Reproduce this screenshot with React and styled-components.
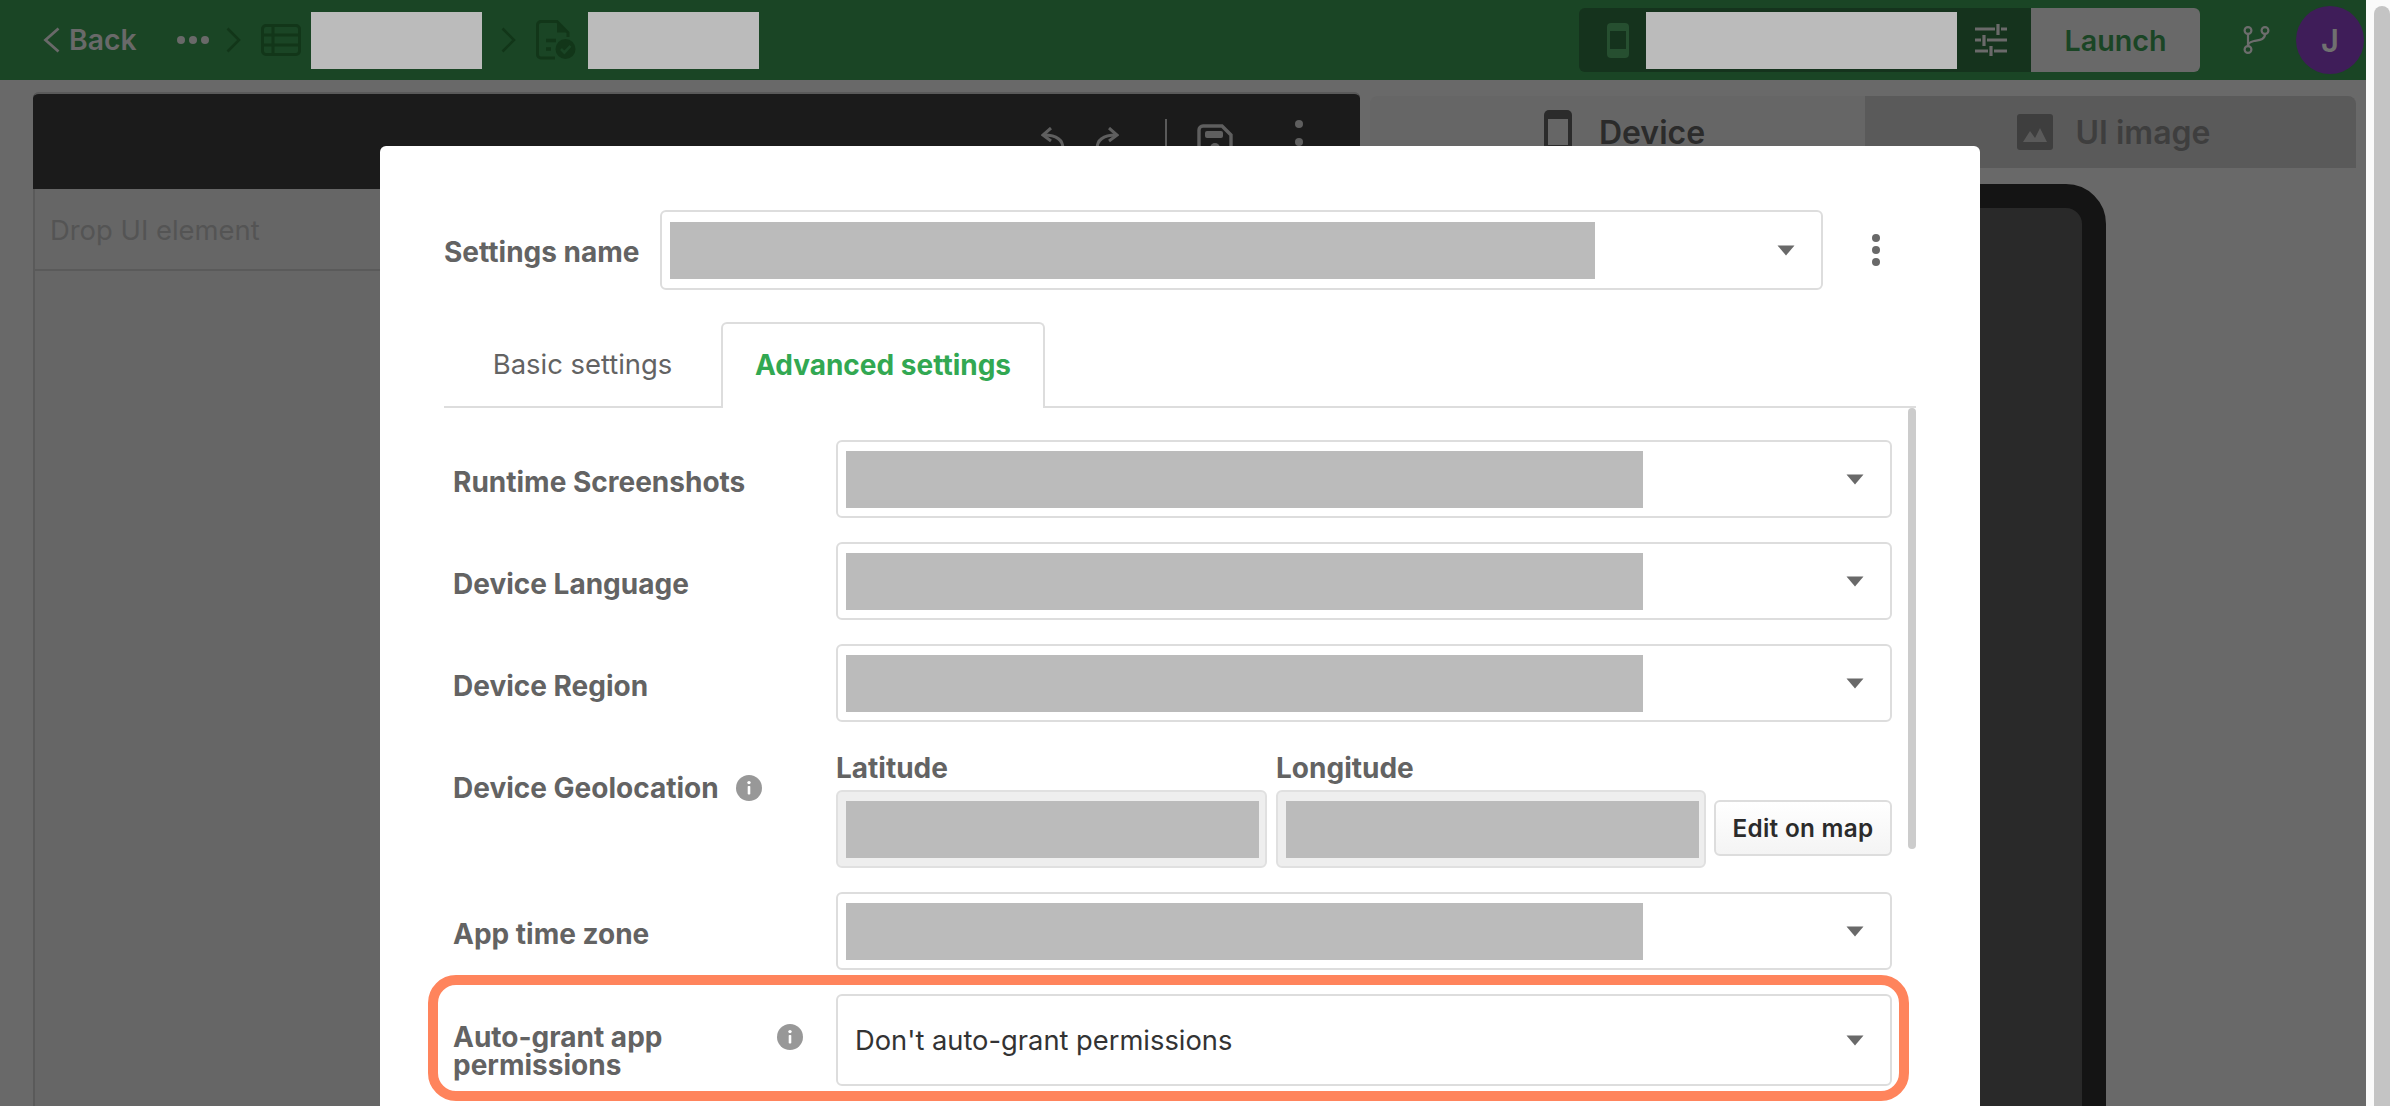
import React from "react";
import styled, { createGlobalStyle } from "styled-components";

const Global = createGlobalStyle`
  html, body { margin: 0; padding: 0; height: 100%; overflow: hidden; background: #fafafa; }
  #root { height: 100%; }
  * { box-sizing: border-box; }
  body { font-family: Inter, "Liberation Sans", sans-serif; }
`;

const Page = styled.div`
  display: flex;
  height: 1106px;
  width: 2390px;
`;
const Main = styled.div`
  position: relative;
  width: 2366px;
  display: flex;
  flex-direction: column;
  background: #696969;
  overflow: hidden;
`;
const PageScroll = styled.div`
  width: 24px;
  padding: 6px 0 0 8px;
  background: #fafafa;
`;
const PageThumb = styled.div`
  height: 100%;
  background: #c4c4c4;
  border-radius: 8px 8px 0 0;
`;

/* top bar */
const TopBar = styled.header`
  flex: none;
  height: 80px;
  background: #1a4525;
  display: flex;
  align-items: center;
  padding: 0 2px 0 43px;
`;
const BackLabel = styled.span`
  margin-left: 9px;
  font-size: 28.3px;
  font-weight: 600;
  color: #696969;
`;
const Crumbs = styled.div`
  display: flex;
  align-items: center;
  margin-left: 40px;
`;
const Redacted = styled.div`
  flex: none;
  width: ${(p) => p.$w}px;
  height: 57px;
  background: #bbbbbb;
`;
const CrumbIcon = styled.svg`
  flex: none;
  display: block;
  margin: ${(p) => p.$m || "0"};
`;
const ToolGroup = styled.div`
  margin-left: auto;
  height: 64px;
  display: flex;
  align-items: center;
  background: #15331d;
  border-radius: 6px 0 0 6px;
  padding: 0 24px 0 28px;
`;
const LaunchButton = styled.div`
  height: 64px;
  width: 169px;
  display: flex;
  align-items: center;
  justify-content: center;
  background: #696969;
  color: #1a4525;
  font-size: 28.7px;
  font-weight: 600;
  border-radius: 0 6px 6px 0;
`;
const Avatar = styled.div`
  width: 68px;
  height: 68px;
  border-radius: 50%;
  background: #3f1d59;
  color: #707070;
  font-size: 31px;
  font-weight: 600;
  display: flex;
  align-items: center;
  justify-content: center;
  margin-left: 26px;
`;

/* workspace */
const Workspace = styled.div`
  flex: 1;
  min-height: 0;
  display: flex;
  gap: 10px;
  padding: 12px 10px 0 33px;
`;
const EditorPanel = styled.section`
  width: 1327px;
  background: #666666;
  border: solid #5a5a5a;
  border-width: 0 2px;
  border-radius: 6px 6px 0 0;
  display: flex;
  flex-direction: column;
`;
const EditorHeader = styled.div`
  height: 97px;
  margin: 0 -2px;
  background: #1b1b1b;
  border-top: 2px solid #5a5a5a;
  border-radius: 6px 6px 0 0;
  display: flex;
  align-items: center;
  justify-content: flex-end;
  padding-right: 57px;
`;
const HeaderDivider = styled.div`
  width: 2px;
  height: 46px;
  background: #5a5a5a;
  margin: 0 30px 0 46px;
`;
const DropRow = styled.div`
  height: 82px;
  display: flex;
  align-items: center;
  padding: 2px 0 0 15px;
  border-bottom: 2px solid #5a5a5a;
  font-size: 27.4px;
  color: #545454;
`;
const DevicePanel = styled.section`
  width: 986px;
  margin-top: 4px;
  display: flex;
  flex-direction: column;
  align-items: center;
  overflow: hidden;
`;
const DeviceTabs = styled.div`
  flex: none;
  width: 100%;
  height: 72px;
  display: flex;
  border-radius: 8px 8px 0 0;
  overflow: hidden;
`;
const DeviceTab = styled.div`
  width: ${(p) => p.$w}px;
  display: flex;
  align-items: center;
  justify-content: center;
  gap: ${(p) => p.$gap}px;
  padding-left: ${(p) => p.$pl}px;
  background: ${(p) => (p.$active ? "#666666" : "#5a5a5a")};
  color: ${(p) => (p.$active ? "#2b2b2b" : "#3e3e3e")};
  font-size: 32px;
  font-weight: 600;
`;
const Phone = styled.div`
  flex: none;
  width: 486px;
  height: 1000px;
  margin-top: 16px;
  border: 24px solid #141414;
  border-radius: 40px;
  background: #292929;
`;

/* modal */
const Modal = styled.div`
  position: absolute;
  left: 380px;
  top: 146px;
  width: 1600px;
  height: 960px;
  background: #fff;
  border-radius: 6px 6px 0 0;
  padding: 64px 64px 0;
  overflow: hidden;
`;
const NameRow = styled.div`
  display: flex;
  align-items: center;
`;
const FieldLabel = styled.div`
  font-size: 28px;
  line-height: 28px;
  font-weight: 700;
  color: #636363;
`;
const NameLabel = styled(FieldLabel)`
  width: 216px;
  padding-top: 4px;
`;
const Select = styled.div`
  flex: ${(p) => (p.$grow ? "1" : "none")};
  height: ${(p) => p.$h || 78}px;
  display: flex;
  align-items: center;
  justify-content: space-between;
  padding: 0 26px 0 ${(p) => p.$pl || 8}px;
  background: #fff;
  border: 2px solid #dddddd;
  border-radius: 6px;
`;
const SelectText = styled.span`
  font-size: 27.3px;
  color: #333333;
`;
const KebabSlot = styled.div`
  flex: none;
  width: 93px;
  display: flex;
  justify-content: center;
  padding-left: 13px;
`;
const Tabs = styled.div`
  margin-top: 32px;
  height: 86px;
  display: flex;
  border-bottom: 2px solid #dddddd;
`;
const Tab = styled.div`
  display: flex;
  align-items: center;
  height: 86px;
  padding-bottom: 2px;
`;
const InactiveTab = styled(Tab)`
  width: 277px;
  justify-content: center;
  color: #636363;
  font-size: 27.4px;
  font-weight: 400;
`;
const ActiveTab = styled(Tab)`
  width: 324px;
  justify-content: center;
  color: #32a852;
  font-size: 28px;
  font-weight: 700;
  background: #fff;
  border: 2px solid #dddddd;
  border-bottom: 0;
  border-radius: 6px 6px 0 0;
`;
const FormArea = styled.div`
  position: relative;
  padding: 32px 24px 0 9px;
`;
const FormThumb = styled.div`
  position: absolute;
  top: 0;
  right: 0;
  width: 8px;
  height: 441px;
  background: #cccccc;
  border-radius: 4px;
`;
const FormRows = styled.div`
  display: flex;
  flex-direction: column;
  gap: 24px;
`;
const FormRow = styled.div`
  display: grid;
  grid-template-columns: 383px 1fr;
`;
const LabelCell = styled.div`
  display: flex;
  align-items: flex-start;
  gap: ${(p) => p.$gap || 0}px;
  align-self: ${(p) => p.$self || "center"};
  padding-top: ${(p) => p.$top ?? 5}px;
`;
const InfoDot = styled.svg`
  flex: none;
  display: block;
  width: 26px;
  height: 26px;
  margin-top: 1px;
`;
const WideLabel = styled(FieldLabel)`
  width: 324px;
  flex: none;
`;
const GeoFields = styled.div`
  display: flex;
  align-items: flex-end;
  gap: 9px;
`;
const GeoField = styled.div`
  width: ${(p) => p.$w}px;
`;
const GeoCaption = styled(FieldLabel)`
  height: 44px;
  padding-top: 8px;
`;
const GeoInput = styled.div`
  height: 78px;
  display: flex;
  align-items: center;
  padding-left: 8px;
  background: #eeeeee;
  border: 2px solid #e0e0e0;
  border-radius: 6px;
`;
const MapButton = styled.div`
  width: 178px;
  height: 56px;
  margin: 0 0 12px -1px;
  display: flex;
  align-items: center;
  justify-content: center;
  border: 2px solid #dddddd;
  border-radius: 6px;
  background: linear-gradient(#ffffff, #f4f4f4);
  color: #2b2b2b;
  font-size: 24.3px;
  font-weight: 600;
  letter-spacing: 0.3px;
`;
const HighlightRow = styled(FormRow)`
  margin: -19px -17px 0 -25px;
  padding: 9px 7px 5px 15px;
  border: 10px solid #ff845c;
  border-radius: 28px;
`;

const Caret = () => (
  <svg width="18" height="11" viewBox="0 0 18 11" style={{ flex: "none" }}>
    <path d="M0.5 0.5H17.5L9 10.5Z" fill="#696969" />
  </svg>
);
const Kebab = ({ color = "#696969", gap = 12, r = 4 }) => (
  <svg width={r * 2} height={gap * 2 + r * 2} viewBox={`0 0 ${r * 2} ${gap * 2 + r * 2}`}>
    <circle cx={r} cy={r} r={r} fill={color} />
    <circle cx={r} cy={r + gap} r={r} fill={color} />
    <circle cx={r} cy={r + gap * 2} r={r} fill={color} />
  </svg>
);
const Info = () => (
  <InfoDot viewBox="0 0 26 26">
    <circle cx="13" cy="13" r="13" fill="#989898" />
    <circle cx="13" cy="7.6" r="1.7" fill="#fff" />
    <rect x="11.7" y="11" width="2.6" height="8.5" rx="0.8" fill="#fff" />
  </InfoDot>
);

const DARK = "#123619";
const Chevron = ({ m }) => (
  <CrumbIcon $m={m} width="15" height="26" viewBox="0 0 15 26" fill="none">
    <path d="M1.5 1.5L13 13L1.5 24.5" stroke={DARK} strokeWidth="2.6" />
  </CrumbIcon>
);

const SELECT_W = 797;

export default function App() {
  return (
    <Page>
      <Global />
      <Main>
        <TopBar>
          <svg width="17" height="26" viewBox="0 0 17 26" fill="none">
            <path d="M15.5 1.5L2.5 13L15.5 24.5" stroke="#696969" strokeWidth="2.8" />
          </svg>
          <BackLabel>Back</BackLabel>
          <Crumbs>
            <CrumbIcon width="32" height="8" viewBox="0 0 32 8">
              <circle cx="4" cy="4" r="4" fill="#696969" />
              <circle cx="16" cy="4" r="4" fill="#696969" />
              <circle cx="28" cy="4" r="4" fill="#696969" />
            </CrumbIcon>
            <Chevron m="0 0 0 17px" />
            <CrumbIcon $m="0 10px 0 20px" width="40" height="32" viewBox="0 0 40 32" fill="none">
              <rect x="1.5" y="1.5" width="37" height="29" rx="3.5" stroke={DARK} strokeWidth="3" />
              <path d="M2 11H38M2 21H38M12 2V30" stroke={DARK} strokeWidth="3" />
            </CrumbIcon>
            <Redacted $w={171} />
            <Chevron m="0 0 0 19px" />
            <CrumbIcon $m="0 12px 0 20px" width="40" height="40" viewBox="0 0 40 40" fill="none">
              <path
                d="M19 38H5a3.5 3.5 0 0 1-3.5-3.5V5A3.5 3.5 0 0 1 5 1.5H21L32 12.5V17"
                stroke={DARK}
                strokeWidth="3"
              />
              <path d="M21 1.5V12.5H32Z" fill={DARK} />
              <path d="M10 20.5H20M10 29H15" stroke={DARK} strokeWidth="3.4" />
              <circle cx="29.5" cy="29" r="10" fill={DARK} />
              <path d="M25 29L28.4 32.5L34.5 25.8" stroke="#1a4525" strokeWidth="2.6" />
            </CrumbIcon>
            <Redacted $w={171} />
          </Crumbs>
          <ToolGroup>
            <CrumbIcon $m="0 17px 0 0" width="22" height="35" viewBox="0 0 22 35">
              <rect width="22" height="35" rx="4" fill="#264f30" />
              <rect x="3" y="8" width="16" height="18" fill="#15331d" />
            </CrumbIcon>
            <Redacted $w={311} />
            <CrumbIcon $m="0 0 0 18px" width="32" height="32" viewBox="0 0 32 32" fill="none">
              <path d="M0 5H20M26 5H32M0 16H6M12 16H32M0 27H13M19 27H32" stroke="#6a6a6a" strokeWidth="3.2" />
              <path d="M23 0V11M9 11V22M16 22V32" stroke="#6a6a6a" strokeWidth="3.2" />
            </CrumbIcon>
          </ToolGroup>
          <LaunchButton>Launch</LaunchButton>
          <CrumbIcon $m="0 0 0 43px" width="27" height="28" viewBox="0 0 27 28" fill="none">
            <circle cx="5" cy="4.5" r="3.4" stroke="#6d6d6d" strokeWidth="2.2" />
            <circle cx="22" cy="4.5" r="3.4" stroke="#6d6d6d" strokeWidth="2.2" />
            <circle cx="5" cy="23.5" r="3.4" stroke="#6d6d6d" strokeWidth="2.2" />
            <path d="M5 8V20M22 8C22 14 16 14 11 15C8 15.6 5 16.5 5 20" stroke="#6d6d6d" strokeWidth="2.2" />
          </CrumbIcon>
          <Avatar>J</Avatar>
        </TopBar>
        <Workspace>
          <EditorPanel>
            <EditorHeader>
              <svg width="24" height="30" viewBox="0 0 24 30" fill="none">
                <path d="M10 1L2 8L10 14" stroke="#5f5f5f" strokeWidth="3" />
                <path d="M3 8C14 8 22 11 22 22V30" stroke="#5f5f5f" strokeWidth="3" />
              </svg>
              <svg width="24" height="30" viewBox="0 0 24 30" fill="none" style={{ marginLeft: 30 }}>
                <path d="M14 1L22 8L14 14" stroke="#5f5f5f" strokeWidth="3" />
                <path d="M21 8C10 8 2 11 2 22V30" stroke="#5f5f5f" strokeWidth="3" />
              </svg>
              <HeaderDivider />
              <svg width="36" height="36" viewBox="0 0 36 36" fill="none">
                <path d="M2 6a4 4 0 0 1 4-4H25L34 11V30a4 4 0 0 1-4 4H6a4 4 0 0 1-4-4Z" stroke="#5f5f5f" strokeWidth="3.4" />
                <rect x="8" y="7" width="18" height="7" rx="2" fill="#5f5f5f" />
                <circle cx="18" cy="24" r="5" fill="#5f5f5f" />
              </svg>
              <span style={{ width: 62 }} />
              <Kebab color="#5f5f5f" gap={18} />
            </EditorHeader>
            <DropRow>Drop UI element</DropRow>
          </EditorPanel>
          <DevicePanel>
            <DeviceTabs>
              <DeviceTab $active $w={495} $gap={27} $pl={14}>
                <svg width="28" height="44" viewBox="0 0 28 44">
                  <rect width="28" height="44" rx="5" fill="#2b2b2b" />
                  <rect x="4" y="9" width="20" height="26" fill="#666666" />
                </svg>
                Device
              </DeviceTab>
              <DeviceTab $w={491} $gap={23} $pl={6}>
                <svg width="36" height="36" viewBox="0 0 36 36">
                  <rect width="36" height="36" rx="3" fill="#3e3e3e" />
                  <path d="M6 28L13 17L18 24L23 14L30 28Z" fill="#5a5a5a" />
                </svg>
                UI image
              </DeviceTab>
            </DeviceTabs>
            <Phone />
          </DevicePanel>
        </Workspace>

        <Modal>
          <NameRow>
            <NameLabel>Settings name</NameLabel>
            <Select $grow $h={80}>
              <Redacted $w={925} />
              <Caret />
            </Select>
            <KebabSlot>
              <Kebab />
            </KebabSlot>
          </NameRow>
          <Tabs>
            <InactiveTab>Basic settings</InactiveTab>
            <ActiveTab>Advanced settings</ActiveTab>
          </Tabs>
          <FormArea>
            <FormThumb />
            <FormRows>
              <FormRow>
                <LabelCell>
                  <FieldLabel>Runtime Screenshots</FieldLabel>
                </LabelCell>
                <Select>
                  <Redacted $w={SELECT_W} />
                  <Caret />
                </Select>
              </FormRow>
              <FormRow>
                <LabelCell>
                  <FieldLabel>Device Language</FieldLabel>
                </LabelCell>
                <Select>
                  <Redacted $w={SELECT_W} />
                  <Caret />
                </Select>
              </FormRow>
              <FormRow>
                <LabelCell>
                  <FieldLabel>Device Region</FieldLabel>
                </LabelCell>
                <Select>
                  <Redacted $w={SELECT_W} />
                  <Caret />
                </Select>
              </FormRow>
              <FormRow>
                <LabelCell $self="start" $top={28} $gap={17}>
                  <FieldLabel>Device Geolocation</FieldLabel>
                  <Info />
                </LabelCell>
                <GeoFields>
                  <GeoField $w={431}>
                    <GeoCaption>Latitude</GeoCaption>
                    <GeoInput>
                      <Redacted $w={413} />
                    </GeoInput>
                  </GeoField>
                  <GeoField $w={430}>
                    <GeoCaption>Longitude</GeoCaption>
                    <GeoInput>
                      <Redacted $w={413} />
                    </GeoInput>
                  </GeoField>
                  <MapButton>Edit on map</MapButton>
                </GeoFields>
              </FormRow>
              <FormRow>
                <LabelCell>
                  <FieldLabel>App time zone</FieldLabel>
                </LabelCell>
                <Select>
                  <Redacted $w={SELECT_W} />
                  <Caret />
                </Select>
              </FormRow>
              <HighlightRow>
                <LabelCell $top={22}>
                  <WideLabel>Auto-grant app permissions</WideLabel>
                  <Info />
                </LabelCell>
                <Select $h={92} $pl={17}>
                  <SelectText>Don't auto-grant permissions</SelectText>
                  <Caret />
                </Select>
              </HighlightRow>
            </FormRows>
          </FormArea>
        </Modal>
      </Main>
      <PageScroll>
        <PageThumb />
      </PageScroll>
    </Page>
  );
}
